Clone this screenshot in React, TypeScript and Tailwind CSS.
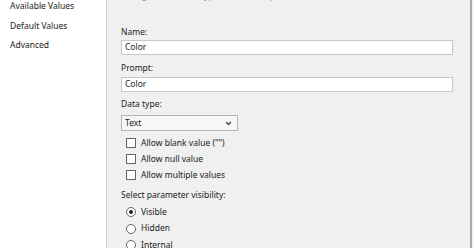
import React from "react";

const font = { fontFamily: '"Noto Sans", "Open Sans", sans-serif' };

function CheckRow({ label }: { label: string }) {
  return (
    <div className="flex items-center h-[16px] pl-[5px]">
      <span className="w-[10px] h-[10px] border border-[#666] bg-white shrink-0" />
      <span className="ml-[5px]">{label}</span>
    </div>
  );
}

function RadioRow({ label, checked }: { label: string; checked?: boolean }) {
  return (
    <div className="flex items-center h-[16.5px] pl-[5px]">
      <span className="w-[10px] h-[10px] rounded-full border border-[#666] bg-white shrink-0 flex items-center justify-center">
        {checked && <span className="w-[4px] h-[4px] rounded-full bg-[#222]" />}
      </span>
      <span className="ml-[5px]">{label}</span>
    </div>
  );
}

export default function App() {
  return (
    <div
      className="w-[474px] h-[248px] flex overflow-hidden text-[8.5px] text-[#222] bg-[#f4f4f4]"
      style={font}
    >
      {/* Left nav */}
      <div className="w-[107px] shrink-0 bg-white border-r border-[#cfcfcf] pl-[10px]">
        <div className="-mt-[4px] h-[20px] flex items-center">Available Values</div>
        <div className="h-[20px] flex items-center">Default Values</div>
        <div className="h-[19px] flex items-center">Advanced</div>
      </div>

      {/* Right panel */}
      <div className="w-[365px] shrink-0 bg-[#f0f0f0] border-r-2 border-[#a8a8a8] pl-[14px] pr-[17px]">
        <div className="-mt-[9px] h-[11px] flex items-center text-[#888]">
          Change name, data type, and other options.
        </div>
        <div className="mt-[23px] h-[14px] flex items-center">Name:</div>
        <div className="mt-[1px] h-[15px] bg-white border border-[#c8c8c8] flex items-center pl-[3px]">
          Color
        </div>
        <div className="mt-[6px] h-[14px] flex items-center">Prompt:</div>
        <div className="mt-[2px] h-[15px] bg-white border border-[#c8c8c8] flex items-center pl-[3px]">
          Color
        </div>
        <div className="mt-[5px] h-[14px] flex items-center">Data type:</div>
        <div className="mt-[4px] w-[117px] h-[16px] bg-[#f7f7f7] border border-[#b5b5b5] flex items-center justify-between pl-[3px] pr-[5px]">
          <span>Text</span>
          <svg width="7" height="5" viewBox="0 0 7 5">
            <path d="M1 1 L3.5 3.5 L6 1" fill="none" stroke="#444" strokeWidth="1.3" />
          </svg>
        </div>
        <div className="mt-[4px]">
          <CheckRow label={'Allow blank value ("")'} />
          <CheckRow label="Allow null value" />
          <CheckRow label="Allow multiple values" />
        </div>
        <div className="mt-[5px] h-[14px] flex items-center">Select parameter visibility:</div>
        <div className="mt-[2px]">
          <RadioRow label="Visible" checked />
          <RadioRow label="Hidden" />
          <RadioRow label="Internal" />
        </div>
      </div>
    </div>
  );
}
